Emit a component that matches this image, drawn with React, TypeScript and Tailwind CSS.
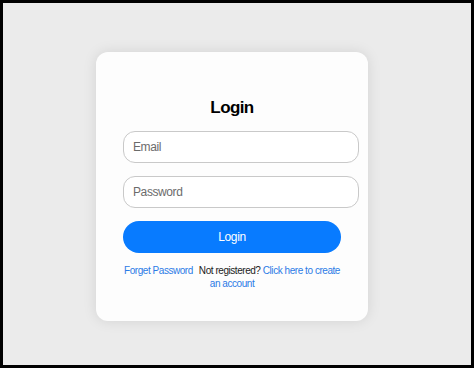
import { useState } from 'react';

const FONT = "font-['Liberation_Sans',Arial,sans-serif]";

const App: React.FC = () => {
  const [email, setEmail] = useState('');
  const [password, setPassword] = useState('');

  return (
    <div className={`h-[368px] w-full border-[3px] border-black bg-[#ebebeb] pt-[49px] pl-[93px] ${FONT}`}>
      {/* Card */}
      <div className="w-[272px] h-[269px] rounded-[12px] bg-[#fdfdfd] shadow-[0_0_14px_rgba(0,0,0,0.1)] px-[27px] pt-[45px]">
        <h1 className="text-center text-[17px] leading-[21px] font-bold tracking-[-0.6px] text-black">Login</h1>

        <div className="mt-[13px] flex flex-col gap-[13px]">
          <input
            type="email"
            value={email}
            onChange={e => setEmail(e.target.value)}
            placeholder="Email"
            className="w-[236px] h-[32px] rounded-[12px] border border-[#c9c9c9] bg-white px-[9px] text-[12px] tracking-[-0.4px] text-black placeholder:text-[#6b6b6b] outline-none"
          />
          <input
            type="password"
            value={password}
            onChange={e => setPassword(e.target.value)}
            placeholder="Password"
            className="w-[236px] h-[32px] rounded-[12px] border border-[#c9c9c9] bg-white px-[9px] text-[12px] tracking-[-0.4px] text-black placeholder:text-[#6b6b6b] outline-none"
          />
          <button className="w-[218px] h-[32px] rounded-full bg-[#087bff] text-white text-[12px] tracking-[-0.4px]">
            Login
          </button>
        </div>

        <p className="mt-[11px] -mx-[4px] text-center text-[10px] leading-[13px] tracking-[-0.45px] text-[#222]">
          <a href="#" className="text-[#2b7be6]">Forget Password</a>
          <span className="ml-[6px]">Not registered?</span>{' '}
          <a href="#" className="text-[#2b7be6]">Click here to create an account</a>
        </p>
      </div>
    </div>
  );
};

export default App;
